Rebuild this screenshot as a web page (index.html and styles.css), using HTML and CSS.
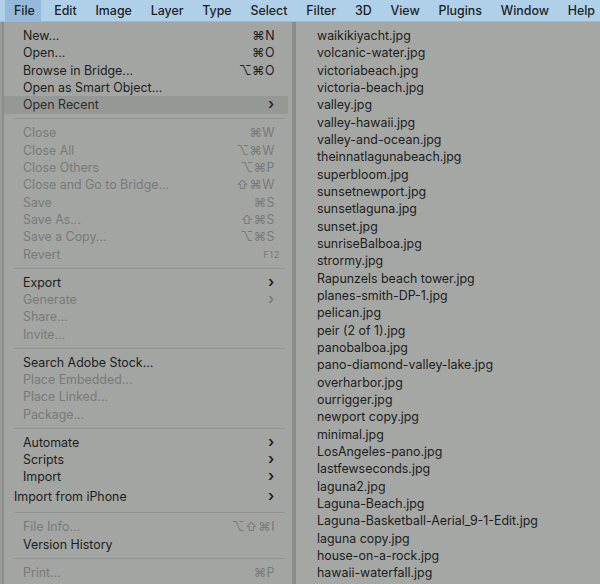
FILE: index.html
```html
<!DOCTYPE html>
<html>
<head>
<meta charset="utf-8">
<link rel="stylesheet" href="styles.css">
</head>
<body>
<div class="screen">
  <nav class="menubar">
    <span class="mb-item active">File</span>
    <span class="mb-item">Edit</span>
    <span class="mb-item">Image</span>
    <span class="mb-item">Layer</span>
    <span class="mb-item">Type</span>
    <span class="mb-item">Select</span>
    <span class="mb-item">Filter</span>
    <span class="mb-item">3D</span>
    <span class="mb-item">View</span>
    <span class="mb-item">Plugins</span>
    <span class="mb-item">Window</span>
    <span class="mb-item">Help</span>
  </nav>
  <div class="menus">
    <div class="menu">
      <div class="row"><span class="label">New...</span><span class="key">⌘N</span></div>
      <div class="row"><span class="label">Open...</span><span class="key">⌘O</span></div>
      <div class="row"><span class="label">Browse in Bridge...</span><span class="key">⌥⌘O</span></div>
      <div class="row"><span class="label">Open as Smart Object...</span></div>
      <div class="row selected"><span class="label">Open Recent</span><span class="arrow">›</span></div>
      <div class="sep"></div>
      <div class="row off"><span class="label">Close</span><span class="key">⌘W</span></div>
      <div class="row off"><span class="label">Close All</span><span class="key">⌥⌘W</span></div>
      <div class="row off"><span class="label">Close Others</span><span class="key">⌥⌘P</span></div>
      <div class="row off"><span class="label">Close and Go to Bridge...</span><span class="key">⇧⌘W</span></div>
      <div class="row off"><span class="label">Save</span><span class="key">⌘S</span></div>
      <div class="row off"><span class="label">Save As...</span><span class="key">⇧⌘S</span></div>
      <div class="row off"><span class="label">Save a Copy...</span><span class="key">⌥⌘S</span></div>
      <div class="row off"><span class="label">Revert</span><span class="key small">F12</span></div>
      <div class="sep"></div>
      <div class="row"><span class="label">Export</span><span class="arrow">›</span></div>
      <div class="row off"><span class="label">Generate</span><span class="arrow">›</span></div>
      <div class="row off"><span class="label">Share...</span></div>
      <div class="row off"><span class="label">Invite...</span></div>
      <div class="sep"></div>
      <div class="row"><span class="label">Search Adobe Stock...</span></div>
      <div class="row off"><span class="label">Place Embedded...</span></div>
      <div class="row off"><span class="label">Place Linked...</span></div>
      <div class="row off"><span class="label">Package...</span></div>
      <div class="sep"></div>
      <div class="row"><span class="label">Automate</span><span class="arrow">›</span></div>
      <div class="row"><span class="label">Scripts</span><span class="arrow">›</span></div>
      <div class="row"><span class="label">Import</span><span class="arrow">›</span></div>
      <div class="row outdent"><span class="label">Import from iPhone</span><span class="arrow">›</span></div>
      <div class="sep"></div>
      <div class="row off"><span class="label">File Info...</span><span class="key">⌥⇧⌘I</span></div>
      <div class="row"><span class="label">Version History</span></div>
      <div class="sep"></div>
      <div class="row off"><span class="label">Print...</span><span class="key">⌘P</span></div>
    </div>
    <div class="submenu">
      <div class="file">waikikiyacht.jpg</div>
      <div class="file">volcanic-water.jpg</div>
      <div class="file">victoriabeach.jpg</div>
      <div class="file">victoria-beach.jpg</div>
      <div class="file">valley.jpg</div>
      <div class="file">valley-hawaii.jpg</div>
      <div class="file">valley-and-ocean.jpg</div>
      <div class="file">theinnatlagunabeach.jpg</div>
      <div class="file">superbloom.jpg</div>
      <div class="file">sunsetnewport.jpg</div>
      <div class="file">sunsetlaguna.jpg</div>
      <div class="file">sunset.jpg</div>
      <div class="file">sunriseBalboa.jpg</div>
      <div class="file">strormy.jpg</div>
      <div class="file">Rapunzels beach tower.jpg</div>
      <div class="file">planes-smith-DP-1.jpg</div>
      <div class="file">pelican.jpg</div>
      <div class="file">peir (2 of 1).jpg</div>
      <div class="file">panobalboa.jpg</div>
      <div class="file">pano-diamond-valley-lake.jpg</div>
      <div class="file">overharbor.jpg</div>
      <div class="file">ourrigger.jpg</div>
      <div class="file">newport copy.jpg</div>
      <div class="file">minimal.jpg</div>
      <div class="file">LosAngeles-pano.jpg</div>
      <div class="file">lastfewseconds.jpg</div>
      <div class="file">laguna2.jpg</div>
      <div class="file">Laguna-Beach.jpg</div>
      <div class="file">Laguna-Basketball-Aerial_9-1-Edit.jpg</div>
      <div class="file">laguna copy.jpg</div>
      <div class="file">house-on-a-rock.jpg</div>
      <div class="file">hawaii-waterfall.jpg</div>
    </div>
  </div>
</div>
</body>
</html>
```

FILE: styles.css
```css
html, body {
  margin: 0;
  padding: 0;
  background: #a4a6a4;
}
.screen {
  width: 600px;
  height: 584px;
  overflow: hidden;
  font-family: "Inter", "Liberation Sans", sans-serif;
  color: #1c1d1c;
  display: flex;
  flex-direction: column;
}
.menubar {
  height: 21px;
  flex: none;
  background: #b0d0e9;
  border-bottom: 1px solid #9bb9cf;
  display: flex;
  align-items: stretch;
  padding-left: 5px;
  font-size: 12.4px;
  font-weight: 500;
  color: #1a1f24;
}
.mb-item {
  display: flex;
  align-items: center;
  padding: 0 9.4px;
  white-space: nowrap;
}
.mb-item.active {
  background: #95bad9;
  padding: 0 6px 0 9px;
  margin-right: 4px;
}
.menus {
  flex: 1;
  display: flex;
  min-height: 0;
  background: #9a9c9a;
}
.menu {
  width: 288px;
  margin-left: 2px;
  border-left: 2px solid #8c8e8c;
  border-right: 1px solid #8e908e;
  background: #a3a5a3;
  padding-top: 5px;
  flex: none;
  font-size: 12.4px;
}
.row {
  height: 17.33px;
  display: flex;
  align-items: center;
  padding: 0 0 0 19px;
  margin-right: 4px;
  white-space: nowrap;
}
.row .label {
  flex: 1;
}
.row .key {
  width: 60px;
  text-align: right;
  padding-right: 13px;
  letter-spacing: 0.5px;
  font-family: "Inter", "DejaVu Sans", sans-serif;
}
.row .key.small {
  font-size: 9.5px;
  padding-right: 8px;
}
.row .arrow {
  width: 20px;
  font-size: 15px;
  line-height: 1;
  text-align: left;
  font-weight: 600;
  position: relative;
  top: -1px;
}
.row.off {
  color: #787a78;
}
.row.selected {
  background: #969896;
  color: #2a2b2a;
}
.row.outdent {
  padding-left: 10px;
  height: 22px;
}
.sep {
  height: 10.7px;
  display: flex;
  align-items: center;
  margin: 0 7px 0 10px;
}
.sep::before {
  content: "";
  flex: 1;
  height: 1px;
  background: #929492;
}
.submenu {
  flex: 1;
  border-left: 3px solid #8a8c8a;
  background: #a5a7a5;
  padding-top: 5px;
  padding-left: 21px;
  font-size: 12.4px;
}
.file {
  height: 17.33px;
  display: flex;
  align-items: center;
  white-space: nowrap;
}
```
